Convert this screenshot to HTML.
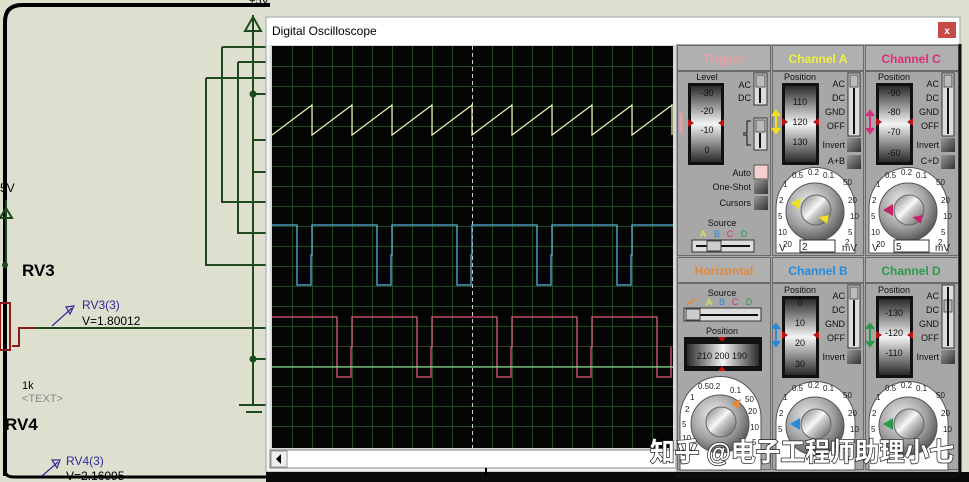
<!DOCTYPE html>
<html><head><meta charset="utf-8"><style>
html,body{margin:0;padding:0;width:969px;height:482px;overflow:hidden;background:#dfdfd0}
svg{display:block}
text{font-family:"Liberation Sans","Noto Sans CJK SC",sans-serif}
</style></head><body>
<svg width="969" height="482" viewBox="0 0 969 482" xmlns="http://www.w3.org/2000/svg">
<defs>
<linearGradient id="drum" x1="0" y1="0" x2="0" y2="1">
<stop offset="0" stop-color="#2a2a2a"/><stop offset="0.5" stop-color="#f4f4f4"/><stop offset="1" stop-color="#2a2a2a"/></linearGradient>
<linearGradient id="hdrum" x1="0" y1="0" x2="1" y2="0">
<stop offset="0" stop-color="#2a2a2a"/><stop offset="0.5" stop-color="#f4f4f4"/><stop offset="1" stop-color="#2a2a2a"/></linearGradient>
<radialGradient id="knob" cx="0.4" cy="0.35" r="0.7">
<stop offset="0" stop-color="#f0f0f0"/><stop offset="0.6" stop-color="#a0a0a0"/><stop offset="1" stop-color="#505050"/></radialGradient>
<linearGradient id="cap" x1="0" y1="0" x2="1" y2="1">
<stop offset="0" stop-color="#777"/><stop offset="0.45" stop-color="#f8f8f8"/><stop offset="0.55" stop-color="#ccc"/><stop offset="1" stop-color="#555"/></linearGradient>
<linearGradient id="btn" x1="0" y1="0" x2="1" y2="1">
<stop offset="0" stop-color="#999"/><stop offset="1" stop-color="#333"/></linearGradient>
</defs>

<rect width="969" height="482" fill="#dfdfd0"/>
<path d="M5,476 V22 Q5,5 22,5 H270" fill="none" stroke="#000" stroke-width="4"/>
<path d="M5,470 Q5,477 14,477 H270" fill="none" stroke="#000" stroke-width="3"/>
<g stroke="#1c4a1c" stroke-width="2" fill="none">
<path d="M253,15 V405"/>
<path d="M245,31 L253,17 L261,31 Z"/>
<path d="M222,47 H270 M222,47 V202 H270"/>
<path d="M238,62 H270 M238,62 V233 H270"/>
<path d="M206,78 H270 M206,78 V265 H270"/>
<path d="M253,94 H270 M253,140 H270 M253,172 H270"/>
<path d="M35,328 H270 M253,359 H270"/>
<path d="M239,405 H272 M246,412 H262"/>
<path d="M0,218 L6,208 L12,218 Z M6,200 V265"/>
</g>
<circle cx="253" cy="94" r="3.5" fill="#1c4a1c"/>
<circle cx="253" cy="359" r="3.5" fill="#1c4a1c"/>
<circle cx="5" cy="265" r="3" fill="#1c4a1c"/>
<text x="249" y="4" font-size="11" fill="#000">+5V</text>
<text x="0" y="192" font-size="12" fill="#000">5V</text>
<text x="22" y="276" font-size="17" font-weight="bold" fill="#000">RV3</text>
<text x="5" y="430" font-size="17" font-weight="bold" fill="#000">RV4</text>
<text x="82" y="309" font-size="12" fill="#2c2c9a">RV3(3)</text>
<text x="82" y="325" font-size="12" fill="#000">V=1.80012</text>
<text x="66" y="465" font-size="12" fill="#2c2c9a">RV4(3)</text>
<text x="66" y="480" font-size="12" fill="#000">V=2.16095</text>
<text x="22" y="389" font-size="11" fill="#000">1k</text>
<text x="22" y="402" font-size="11" fill="#888">&lt;TEXT&gt;</text>
<path d="M52,326 L72,308 M66,307 L74,306 L70,314 Z" stroke="#2c2c9a" stroke-width="1.2" fill="none"/>
<path d="M42,476 L58,462 M52,460 L60,460 L57,468 Z" stroke="#2c2c9a" stroke-width="1.2" fill="none"/>
<rect x="0" y="303" width="10" height="47" fill="none" stroke="#8b1a1a" stroke-width="2"/>
<path d="M35,328 H19 V346 H12" stroke="#8b1a1a" stroke-width="2" fill="none"/>

<rect x="266" y="17" width="694" height="455" fill="#f2f2f2" stroke="#9aa" stroke-width="1"/>
<rect x="267" y="18" width="692" height="27" fill="#fff"/>
<text x="272" y="35" font-size="12" fill="#000">Digital Oscilloscope</text>
<rect x="938" y="22" width="18" height="16" fill="#c74a48"/>
<text x="947" y="34" font-size="10" fill="#fff" text-anchor="middle" font-weight="bold">x</text>

<rect x="270" y="45" width="406" height="405" fill="#d8d8d8"/>
<rect x="272" y="46" width="401" height="402" fill="#050505"/>
<g stroke="#1f4a22" stroke-width="1">
<path d="M292.5,46V448M312.5,46V448M332.5,46V448M352.5,46V448M372.5,46V448M392.5,46V448M412.5,46V448M432.5,46V448M452.5,46V448M492.5,46V448M512.5,46V448M532.5,46V448M552.5,46V448M572.5,46V448M592.5,46V448M612.5,46V448M632.5,46V448M652.5,46V448"/>
<path d="M272,66.5H673M272,86.5H673M272,106.5H673M272,126.5H673M272,146.5H673M272,166.5H673M272,186.5H673M272,206.5H673M272,226.5H673M272,246.5H673M272,266.5H673M272,286.5H673M272,306.5H673M272,326.5H673M272,346.5H673M272,366.5H673M272,386.5H673M272,406.5H673M272,426.5H673"/>
</g>
<path d="M472.5,46V448" stroke="#ccc" stroke-width="1" stroke-dasharray="4,3"/>
<path d="M272,135 L312,105 V135 L352,105 V135 L392,105 V135 L432,105 V135 L472,105 V135 L512,105 V135 L552,105 V135 L592,105 V135 L632,105 V135 L672,105 V135" stroke="#f2f2b0" stroke-width="1.2" fill="none"/>
<path d="M272,225 H297 V285 H311 V255 H312 V225 H377 V285 H391 V255 H392 V225 H457 V285 H471 V255 H472 V225 H537 V285 H551 V255 H552 V225 H617 V285 H631 V255 H632 V225 H673" stroke="#5ab0e0" stroke-width="1.3" fill="none"/>
<path d="M272,317 H337 V377 H351 V347 H352 V317 H417 V377 H431 V347 H432 V317 H497 V377 H511 V347 H512 V317 H577 V377 H591 V347 H592 V317 H657 V377 H671 V347" stroke="#e05a7a" stroke-width="1.3" fill="none"/>
<path d="M272,367 H673" stroke="#7fd08a" stroke-width="1.2"/>
<rect x="270" y="450" width="406" height="18" fill="#fff" stroke="#888"/>
<rect x="271" y="451" width="16" height="16" fill="#eee" stroke="#999"/>
<path d="M281,454 L276,459 L281,464 Z" fill="#000"/>
<rect x="266" y="472" width="703" height="10" fill="#0a0a0a"/>
<path d="M486,468 V477" stroke="#000" stroke-width="2"/>

<rect x="676" y="44" width="284" height="428" fill="#a7a7a7"/>
<g fill="#b0b0b0" stroke="#6a6a6a">
<rect x="677.5" y="45.5" width="93" height="25"/>
<rect x="772.5" y="45.5" width="91" height="25"/>
<rect x="865.5" y="45.5" width="93" height="25"/>
<rect x="677.5" y="257.5" width="93" height="25"/>
<rect x="772.5" y="257.5" width="91" height="25"/>
<rect x="865.5" y="257.5" width="93" height="25"/>
</g>
<g fill="none" stroke="#6a6a6a">
<rect x="677.5" y="71.5" width="93" height="184"/>
<rect x="772.5" y="71.5" width="91" height="184"/>
<rect x="865.5" y="71.5" width="93" height="184"/>
<rect x="677.5" y="283.5" width="93" height="186"/>
<rect x="772.5" y="283.5" width="91" height="186"/>
<rect x="865.5" y="283.5" width="93" height="186"/>
</g>
<g font-size="12" font-weight="bold" text-anchor="middle">
<text x="724" y="63" fill="#e8a0a8">Trigger</text>
<text x="818" y="63" fill="#f0f040">Channel A</text>
<text x="911" y="63" fill="#d8307a">Channel C</text>
<text x="724" y="275" fill="#e08a3a">Horizontal</text>
<text x="818" y="275" fill="#2a8ad8">Channel B</text>
<text x="911" y="275" fill="#2a9a4a">Channel D</text>
</g>

<g font-size="9" fill="#111">
<text x="707" y="80" text-anchor="middle">Level</text>
<rect x="688" y="83" width="36" height="82" fill="#111"/>
<rect x="691" y="86" width="30" height="76" fill="url(#drum)"/>
<text x="707" y="96" text-anchor="middle">-30</text>
<text x="707" y="114" text-anchor="middle">-20</text>
<text x="707" y="133" text-anchor="middle">-10</text>
<text x="707" y="153" text-anchor="middle">0</text>
<path d="M688,119 l6,4 l-6,4Z M724,119 l-6,4 l6,4Z" fill="#c01010"/>
<path d="M681,113 v20" stroke="#e8a0a8" stroke-width="3"/>
<text x="751" y="88" text-anchor="end">AC</text>
<text x="751" y="101" text-anchor="end">DC</text>
<rect x="754" y="73" width="13" height="32" fill="#ddd" stroke="#333"/>
<rect x="756" y="75" width="9" height="12" fill="#bbb" stroke="#555"/>
<path d="M760,88 V103" stroke="#111" stroke-width="2"/>
<rect x="754" y="118" width="13" height="32" fill="#ddd" stroke="#333"/>
<rect x="756" y="120" width="9" height="12" fill="#bbb" stroke="#555"/>
<path d="M760,133 V148" stroke="#111" stroke-width="2"/>
<path d="M743,133 h4 v-12 h4 M743,135 h4 v10 h4" stroke="#111" fill="none"/>
<text x="751" y="176" text-anchor="end">Auto</text>
<text x="751" y="190" text-anchor="end">One-Shot</text>
<text x="751" y="206" text-anchor="end">Cursors</text>
<rect x="754" y="165" width="14" height="14" fill="#f4d0d0" stroke="#555"/>
<rect x="754" y="180" width="14" height="14" fill="url(#btn)"/>
<rect x="754" y="196" width="14" height="14" fill="url(#btn)"/>
<text x="722" y="226" text-anchor="middle">Source</text>
<text x="703" y="237" fill="#f0f040" text-anchor="middle">A</text>
<text x="717" y="237" fill="#2a8ad8" text-anchor="middle">B</text>
<text x="730" y="237" fill="#d8307a" text-anchor="middle">C</text>
<text x="744" y="237" fill="#2a9a4a" text-anchor="middle">D</text>
<rect x="692" y="240" width="62" height="12" fill="#ddd" stroke="#333"/>
<path d="M696,246 H750" stroke="#111" stroke-width="2"/>
<rect x="707" y="241" width="14" height="10" fill="#ccc" stroke="#444"/>

<text x="800" y="80" text-anchor="middle">Position</text>
<rect x="782" y="83" width="37" height="82" fill="#111"/>
<rect x="785" y="86" width="31" height="76" fill="url(#drum)"/>
<text x="800" y="105" text-anchor="middle">110</text>
<text x="800" y="125" text-anchor="middle">120</text>
<text x="800" y="145" text-anchor="middle">130</text>
<path d="M782,118 l6,4 l-6,4Z M819,118 l-6,4 l6,4Z" fill="#c01010"/>
<path d="M776,112 v20 M772,116 l4,-5 l4,5 M772,128 l4,5 l4,-5" stroke="#f0e020" stroke-width="2" fill="#f0e020"/>
<text x="845" y="87" text-anchor="end">AC</text>
<text x="845" y="101" text-anchor="end">DC</text>
<text x="845" y="115" text-anchor="end">GND</text>
<text x="845" y="129" text-anchor="end">OFF</text>
<rect x="848" y="73" width="12" height="63" fill="#ddd" stroke="#333"/>
<rect x="850" y="75" width="8" height="12" fill="#bbb" stroke="#555"/>
<path d="M854,88 V134" stroke="#111" stroke-width="2"/>
<text x="845" y="148" text-anchor="end">Invert</text>
<text x="845" y="164" text-anchor="end">A+B</text>
<rect x="847" y="138" width="14" height="14" fill="url(#btn)"/>
<rect x="847" y="155" width="14" height="14" fill="url(#btn)"/>

<text x="894" y="80" text-anchor="middle">Position</text>
<rect x="876" y="83" width="37" height="82" fill="#111"/>
<rect x="879" y="86" width="31" height="76" fill="url(#drum)"/>
<text x="894" y="96" text-anchor="middle">-90</text>
<text x="894" y="115" text-anchor="middle">-80</text>
<text x="894" y="135" text-anchor="middle">-70</text>
<text x="894" y="156" text-anchor="middle">-60</text>
<path d="M876,118 l6,4 l-6,4Z M913,118 l-6,4 l6,4Z" fill="#c01010"/>
<path d="M870,112 v20 M866,116 l4,-5 l4,5 M866,128 l4,5 l4,-5" stroke="#d8307a" stroke-width="2" fill="#d8307a"/>
<text x="939" y="87" text-anchor="end">AC</text>
<text x="939" y="101" text-anchor="end">DC</text>
<text x="939" y="115" text-anchor="end">GND</text>
<text x="939" y="129" text-anchor="end">OFF</text>
<rect x="942" y="73" width="12" height="63" fill="#ddd" stroke="#333"/>
<rect x="944" y="75" width="8" height="12" fill="#bbb" stroke="#555"/>
<path d="M948,88 V134" stroke="#111" stroke-width="2"/>
<text x="939" y="148" text-anchor="end">Invert</text>
<text x="939" y="164" text-anchor="end">C+D</text>
<rect x="941" y="138" width="14" height="14" fill="url(#btn)"/>
<rect x="941" y="155" width="14" height="14" fill="url(#btn)"/>

<text x="722" y="296" text-anchor="middle">Source</text>
<text x="709" y="305" fill="#f0f040" text-anchor="middle">A</text>
<text x="722" y="305" fill="#2a8ad8" text-anchor="middle">B</text>
<text x="735" y="305" fill="#d8307a" text-anchor="middle">C</text>
<text x="749" y="305" fill="#2a9a4a" text-anchor="middle">D</text>
<path d="M687,305 l8,-6" stroke="#e08a3a" stroke-width="2"/>
<rect x="684" y="308" width="77" height="13" fill="#ddd" stroke="#333"/>
<path d="M688,315 H758" stroke="#111" stroke-width="2"/>
<rect x="686" y="309" width="14" height="11" fill="#ccc" stroke="#444"/>
<text x="722" y="334" text-anchor="middle">Position</text>
<rect x="684" y="337" width="78" height="34" fill="#111"/>
<rect x="687" y="344" width="72" height="22" fill="url(#hdrum)"/>
<text x="722" y="359" text-anchor="middle">210  200  190</text>
<path d="M718,337 l4,5 l4,-5Z M718,371 l4,-5 l4,5Z" fill="#c01010"/>

<text x="800" y="293" text-anchor="middle">Position</text>
<rect x="782" y="296" width="37" height="82" fill="#111"/>
<rect x="785" y="299" width="31" height="76" fill="url(#drum)"/>
<text x="800" y="306" text-anchor="middle">0</text>
<text x="800" y="326" text-anchor="middle">10</text>
<text x="800" y="346" text-anchor="middle">20</text>
<text x="800" y="367" text-anchor="middle">30</text>
<path d="M782,331 l6,4 l-6,4Z M819,331 l-6,4 l6,4Z" fill="#c01010"/>
<path d="M776,325 v20 M772,329 l4,-5 l4,5 M772,341 l4,5 l4,-5" stroke="#2a8ad8" stroke-width="2" fill="#2a8ad8"/>
<text x="845" y="299" text-anchor="end">AC</text>
<text x="845" y="313" text-anchor="end">DC</text>
<text x="845" y="327" text-anchor="end">GND</text>
<text x="845" y="341" text-anchor="end">OFF</text>
<rect x="848" y="285" width="12" height="63" fill="#ddd" stroke="#333"/>
<rect x="850" y="287" width="8" height="12" fill="#bbb" stroke="#555"/>
<path d="M854,300 V346" stroke="#111" stroke-width="2"/>
<text x="845" y="360" text-anchor="end">Invert</text>
<rect x="847" y="350" width="14" height="14" fill="url(#btn)"/>

<text x="894" y="293" text-anchor="middle">Position</text>
<rect x="876" y="296" width="37" height="82" fill="#111"/>
<rect x="879" y="299" width="31" height="76" fill="url(#drum)"/>
<text x="894" y="316" text-anchor="middle">-130</text>
<text x="894" y="336" text-anchor="middle">-120</text>
<text x="894" y="356" text-anchor="middle">-110</text>
<path d="M876,331 l6,4 l-6,4Z M913,331 l-6,4 l6,4Z" fill="#c01010"/>
<path d="M870,325 v20 M866,329 l4,-5 l4,5 M866,341 l4,5 l4,-5" stroke="#2a9a4a" stroke-width="2" fill="#2a9a4a"/>
<text x="939" y="299" text-anchor="end">AC</text>
<text x="939" y="313" text-anchor="end">DC</text>
<text x="939" y="327" text-anchor="end">GND</text>
<text x="939" y="341" text-anchor="end">OFF</text>
<rect x="942" y="285" width="12" height="63" fill="#ddd" stroke="#333"/>
<rect x="944" y="300" width="8" height="12" fill="#bbb" stroke="#555"/>
<path d="M948,287 V346" stroke="#111" stroke-width="2"/>
<text x="939" y="360" text-anchor="end">Invert</text>
<rect x="941" y="350" width="14" height="14" fill="url(#btn)"/>
</g>

<g font-size="8" fill="#222">
<path d="M776,253 V208 A39,40 0 0 1 855,208 V253 Z" fill="#fff" stroke="#555"/>
<circle cx="815" cy="212" r="29" fill="url(#knob)" stroke="#555"/>
<circle cx="816" cy="210" r="15" fill="url(#cap)" stroke="#666"/>
<path d="M791,203 l10,-5 l-2,11Z" fill="#f0e020"/>
<path d="M826,221 l-4,-3 l5,-1Z" fill="#f0e020" stroke="#f0e020" stroke-width="3"/>
<text x="783" y="187">1</text><text x="792" y="178">0.5</text><text x="808" y="175">0.2</text><text x="823" y="178">0.1</text><text x="843" y="185">50</text>
<text x="779" y="203">2</text><text x="778" y="219">5</text><text x="778" y="235">10</text><text x="783" y="247">20</text>
<text x="848" y="203">20</text><text x="850" y="219">10</text><text x="848" y="235">5</text><text x="845" y="245">2</text>
<text x="779" y="251" font-size="10">V</text><text x="842" y="251" font-size="10">mV</text>
<rect x="800" y="240" width="35" height="12" fill="#fff" stroke="#333"/><text x="802" y="250" font-size="10">2</text>
<path d="M869,253 V208 A39,40 0 0 1 948,208 V253 Z" fill="#fff" stroke="#555"/>
<circle cx="908" cy="212" r="29" fill="url(#knob)" stroke="#555"/>
<circle cx="909" cy="210" r="15" fill="url(#cap)" stroke="#666"/>
<path d="M883,210 l10,-6 v12Z" fill="#c8206a"/>
<path d="M920,221 l-4,-3 l5,-1Z" fill="#c8206a" stroke="#c8206a" stroke-width="3"/>
<text x="876" y="187">1</text><text x="885" y="178">0.5</text><text x="901" y="175">0.2</text><text x="916" y="178">0.1</text><text x="936" y="185">50</text>
<text x="872" y="203">2</text><text x="871" y="219">5</text><text x="871" y="235">10</text><text x="876" y="247">20</text>
<text x="941" y="203">20</text><text x="943" y="219">10</text><text x="941" y="235">5</text><text x="938" y="245">2</text>
<text x="872" y="251" font-size="10">V</text><text x="935" y="251" font-size="10">mV</text>
<rect x="894" y="240" width="35" height="12" fill="#fff" stroke="#333"/><text x="896" y="250" font-size="10">5</text>
<path d="M680,470 V418 A39,40 0 0 1 761,418 V470 Z" fill="#fff" stroke="#555"/>
<circle cx="720" cy="424" r="29" fill="url(#knob)" stroke="#555"/>
<circle cx="721" cy="422" r="15" fill="url(#cap)" stroke="#666"/>
<path d="M731,403 l10,-4 l-3,10Z" fill="#e08a3a"/>
<text x="690" y="400">1</text><text x="698" y="389">0.50.2</text><text x="730" y="393">0.1</text><text x="745" y="402">50</text>
<text x="685" y="412">2</text><text x="682" y="427">5</text><text x="682" y="441">10</text><text x="682" y="456">20</text>
<text x="748" y="414">20</text><text x="750" y="430">10</text><text x="752" y="445">5</text>
<path d="M776,470 V422 A39,40 0 0 1 855,422 V470 Z" fill="#fff" stroke="#555"/>
<circle cx="815" cy="426" r="29" fill="url(#knob)" stroke="#555"/>
<circle cx="816" cy="424" r="15" fill="url(#cap)" stroke="#666"/>
<path d="M790,424 l10,-6 v12Z" fill="#2a8ad8"/>
<text x="783" y="400">1</text><text x="792" y="391">0.5</text><text x="808" y="388">0.2</text><text x="823" y="391">0.1</text><text x="843" y="398">50</text>
<text x="779" y="416">2</text><text x="778" y="432">5</text><text x="848" y="416">20</text><text x="850" y="432">10</text>
<path d="M869,470 V422 A39,40 0 0 1 948,422 V470 Z" fill="#fff" stroke="#555"/>
<circle cx="908" cy="426" r="29" fill="url(#knob)" stroke="#555"/>
<circle cx="909" cy="424" r="15" fill="url(#cap)" stroke="#666"/>
<path d="M883,424 l10,-6 v12Z" fill="#2a9a4a"/>
<text x="876" y="400">1</text><text x="885" y="391">0.5</text><text x="901" y="388">0.2</text><text x="916" y="391">0.1</text><text x="936" y="398">50</text>
<text x="872" y="416">2</text><text x="871" y="432">5</text><text x="941" y="416">20</text><text x="943" y="432">10</text>
</g>
<path d="M960,44 V470 Q960,476 952,476 H676" fill="none" stroke="#111" stroke-width="3"/>

<text x="650" y="461" font-size="26" font-weight="bold" fill="#fff" stroke="#222" stroke-width="1.5" paint-order="stroke" textLength="304" lengthAdjust="spacingAndGlyphs">知乎 @电子工程师助理小七</text>
</svg>
</body></html>
